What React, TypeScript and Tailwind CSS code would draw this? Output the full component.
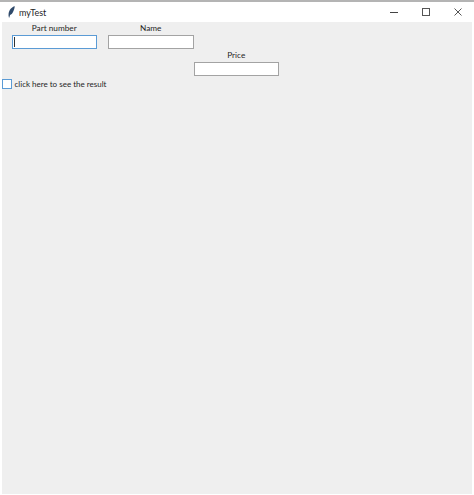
function Field({ label, focused, className }: { label: string; focused?: boolean; className: string }) {
  return (
    <div className={`flex flex-col items-center w-[85.5px] ${className}`}>
      <span className="h-[13px] leading-[13px] text-[8.25px]">{label}</span>
      <div
        className={`w-[85.5px] h-[14px] bg-white border flex items-center pl-[1px] ${
          focused ? "border-[#5b9bd5]" : "border-[#a3a3a3]"
        }`}
      >
        {focused && <span className="w-px h-[10px] bg-[#333]" />}
      </div>
    </div>
  );
}

export default function App() {
  return (
    <div
      className="w-[474px] h-[495px] flex flex-col bg-white text-[#1f1f1f] overflow-hidden"
      style={{ fontFamily: 'Lato, "Noto Sans", sans-serif' }}
    >
      <div className="h-[2px] bg-[#b4b4b4]" />
      <div className="h-[20px] flex items-center bg-white">
        <svg className="ml-[8px] w-[7px] h-[12px]" viewBox="0 0 7 12">
          <path d="M6.8 0.3C3.6 1 1.2 4 0.6 7.6 0.4 9 0.5 10.2 0.9 11.6L1.5 11.6C1.5 10.6 1.7 9.8 2.1 9 4.6 8.4 6.2 4.2 6.8 0.3Z" fill="#2f4a6b" />
        </svg>
        <span className="ml-[4px] text-[9px] leading-none">myTest</span>
        <div className="ml-auto flex items-center">
          <svg className="w-[10px] h-[10px] mr-[22px]" viewBox="0 0 10 10">
            <path d="M1 5.5H9" stroke="#444" strokeWidth="1" fill="none" />
          </svg>
          <svg className="w-[10px] h-[10px] mr-[22px]" viewBox="0 0 10 10">
            <rect x="1.5" y="1.5" width="7" height="7" stroke="#555" strokeWidth="1" fill="none" />
          </svg>
          <svg className="w-[10px] h-[10px] mr-[11px]" viewBox="0 0 10 10">
            <path d="M1.5 1.5L8.5 8.5M8.5 1.5L1.5 8.5" stroke="#555" strokeWidth="1" fill="none" />
          </svg>
        </div>
      </div>
      <div className="flex-1 mx-[2px] mb-[1px] bg-[#efefef]">
        <div className="grid grid-cols-[9.5px_85.5px_11px_85.5px_85.5px] grid-rows-[27px_27px_auto] w-fit">
          <Field label="Part number" focused className="col-start-2 row-start-1" />
          <Field label="Name" className="col-start-4 row-start-1" />
          <Field label="Price" className="col-start-5 row-start-2" />
          <label className="col-span-5 row-start-3 flex items-center h-[14px] mt-[1px] whitespace-nowrap text-[8px]">
            <span className="w-[9.5px] h-[9.5px] bg-white border border-[#5b9bd5]" />
            <span className="ml-[3px]">click here to see the result</span>
          </label>
        </div>
      </div>
    </div>
  );
}
